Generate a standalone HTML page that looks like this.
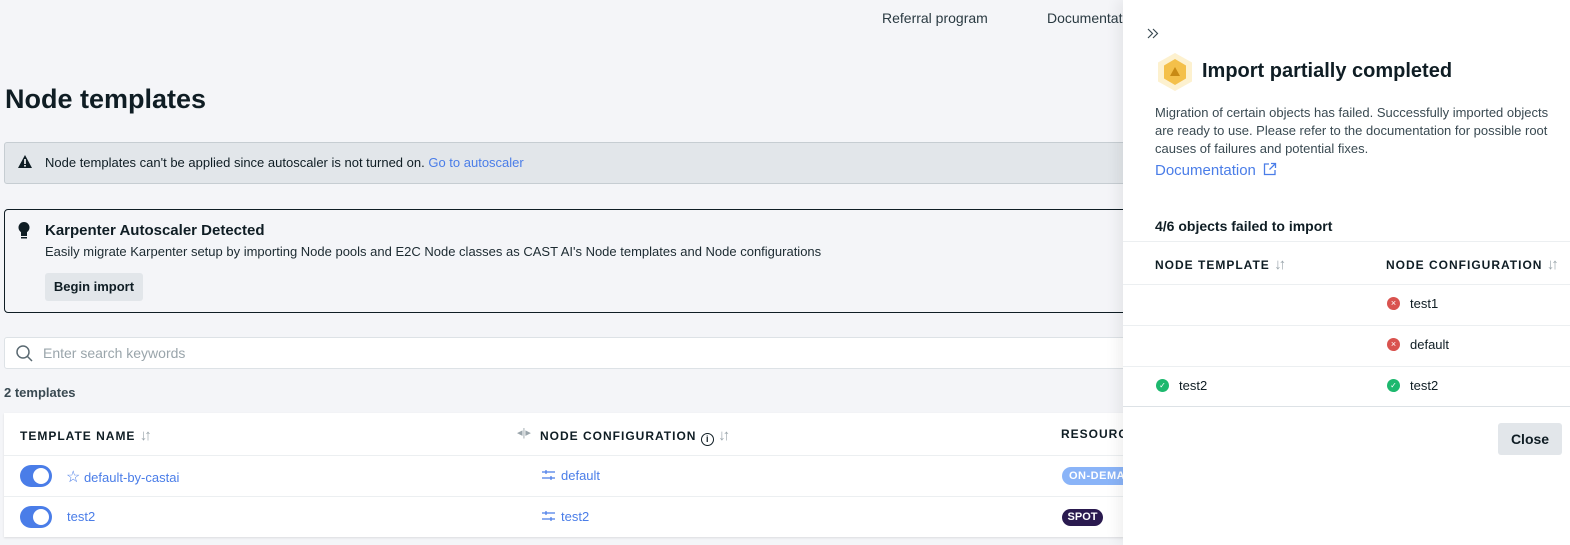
<!DOCTYPE html>
<html><head><meta charset="utf-8"><style>
*{box-sizing:border-box;margin:0;padding:0}
body{width:1570px;height:545px;overflow:hidden;background:#f4f5f8;font-family:"Liberation Sans",sans-serif;color:#0f1d24;position:relative}
.a{position:absolute;white-space:nowrap}
.link{color:#4a7de8}
.th{font-size:12px;font-weight:bold;letter-spacing:1px;color:#0f1d24}
.sort{color:#9aa5ab;font-weight:normal;letter-spacing:-3px;font-size:15px}
</style></head><body>
<div class="a" style="left:882px;top:10px;font-size:14px;color:#2a3a42">Referral program</div>
<div class="a" style="left:1047px;top:10px;font-size:14px;color:#2a3a42">Documentation</div>
<div class="a" style="left:5px;top:84px;font-size:27px;font-weight:bold">Node templates</div>

<div class="a" style="left:4px;top:142px;width:1140px;height:42px;background:#e2e6ea;border:1px solid #c6cdd2;border-radius:3px"></div>
<svg class="a" style="left:17px;top:154px" width="16" height="15" viewBox="0 0 16 15"><path d="M8 1L15 14H1Z" fill="#0f1d24"/><rect x="7.2" y="5" width="1.6" height="5" fill="#fff"/><rect x="7.2" y="11" width="1.6" height="1.6" fill="#fff"/></svg>
<div class="a" style="left:45px;top:155px;font-size:13px">Node templates can't be applied since autoscaler is not turned on. <span class="link">Go to autoscaler</span></div>

<div class="a" style="left:4px;top:209px;width:1140px;height:104px;border:1px solid #0f1d24;border-radius:4px;background:#f4f5f8"></div>
<svg class="a" style="left:18px;top:221px" width="12" height="20" viewBox="0 0 12 20"><circle cx="6" cy="6.5" r="5.5" fill="#0f1d24"/><rect x="3" y="10" width="6" height="5" fill="#0f1d24"/><rect x="3" y="16" width="6" height="1.5" fill="#0f1d24"/></svg>
<div class="a" style="left:45px;top:222px;font-size:15px;font-weight:bold">Karpenter Autoscaler Detected</div>
<div class="a" style="left:45px;top:244px;font-size:13px;color:#1c2a31">Easily migrate Karpenter setup by importing Node pools and E2C Node classes as CAST AI's Node templates and Node configurations</div>
<div class="a" style="left:45px;top:273px;width:98px;height:28px;background:#e2e6ea;border-radius:3px;font-size:13px;font-weight:bold;text-align:center;line-height:28px">Begin import</div>

<div class="a" style="left:4px;top:337px;width:1140px;height:32px;background:#fff;border:1px solid #dde2e6;border-radius:3px"></div>
<svg class="a" style="left:15px;top:344px" width="18" height="18" viewBox="0 0 18 18"><circle cx="8" cy="8" r="6" fill="none" stroke="#5b6a72" stroke-width="1.5"/><path d="M12.5 12.5L17 17" stroke="#5b6a72" stroke-width="1.5"/></svg>
<div class="a" style="left:43px;top:345px;font-size:14px;color:#9aa5ab">Enter search keywords</div>
<div class="a" style="left:4px;top:385px;font-size:13px;font-weight:bold;color:#3a4a52">2 templates</div>

<div class="a" style="left:4px;top:413px;width:1140px;height:124px;background:#fff;box-shadow:0 1px 2px rgba(0,0,0,.1)"></div>
<div class="a" style="left:4px;top:455px;width:1140px;height:1px;background:#eceff1"></div>
<div class="a" style="left:4px;top:496px;width:1140px;height:1px;background:#eceff1"></div>
<div class="a th" style="left:20px;top:427px">TEMPLATE NAME <span class="sort">↓↑</span></div>
<div class="a" style="left:517px;top:426px;color:#9aa5ab;font-size:11px">◂|▸</div>
<div class="a th" style="left:540px;top:427px">NODE CONFIGURATION <span style="display:inline-block;width:13px;height:13px;border:1.3px solid #0f1d24;border-radius:50%;font-size:9px;text-align:center;line-height:11px;letter-spacing:0;vertical-align:-2px">i</span> <span class="sort">↓↑</span></div>
<div class="a th" style="left:1061px;top:427px">RESOURC</div>
<div class="a" style="left:20px;top:465px;width:32px;height:22px;border-radius:11px;background:#4a7de8"><div style="position:absolute;right:3px;top:3px;width:16px;height:16px;border-radius:50%;background:#fff"></div></div>
<div class="a" style="left:20px;top:506px;width:32px;height:22px;border-radius:11px;background:#4a7de8"><div style="position:absolute;right:3px;top:3px;width:16px;height:16px;border-radius:50%;background:#fff"></div></div>
<div class="a link" style="left:66px;top:467px;font-size:13px"><span style="font-size:16px">☆</span> default-by-castai</div>
<div class="a link" style="left:67px;top:509px;font-size:13px">test2</div>
<svg class="a" style="left:542px;top:469px" width="13" height="12" viewBox="0 0 13 12"><path d="M0 3H13M0 9H13M4 1V5M9 7V11" stroke="#4a7de8" stroke-width="1.2"/></svg>
<div class="a link" style="left:561px;top:468px;font-size:13px">default</div>
<svg class="a" style="left:542px;top:510px" width="13" height="12" viewBox="0 0 13 12"><path d="M0 3H13M0 9H13M4 1V5M9 7V11" stroke="#4a7de8" stroke-width="1.2"/></svg>
<div class="a link" style="left:561px;top:509px;font-size:13px">test2</div>
<div class="a" style="left:1062px;top:467px;width:70px;height:18px;border-radius:9px;background:#8ab4f8;color:#fff;font-size:11px;font-weight:bold;line-height:18px;padding-left:7px;letter-spacing:.5px;overflow:hidden">ON-DEMAND</div>
<div class="a" style="left:1062px;top:509px;width:41px;height:17px;border-radius:9px;background:#2a1a4f;color:#fff;font-size:11px;font-weight:bold;line-height:17px;text-align:center">SPOT</div>

<!-- drawer -->
<div class="a" style="left:1123px;top:0;width:447px;height:545px;background:#fff;box-shadow:-6px 0 12px rgba(0,0,0,.06)"></div>
<svg class="a" style="left:1147px;top:28px" width="12" height="11" viewBox="0 0 12 11"><path d="M1 1L5.5 5.5L1 10M6 1L10.5 5.5L6 10" fill="none" stroke="#3a4a52" stroke-width="1.2"/></svg>
<svg class="a" style="left:1155px;top:52px" width="40" height="40" viewBox="0 0 40 40"><path d="M20 1L37 10.5V29.5L20 39L3 29.5V10.5Z" fill="#fdf1cf"/><path d="M20 7L31 13.5V26.5L20 33L9 26.5V13.5Z" fill="#f4c04a"/><path d="M20 15L25 24H15Z" fill="#c88a14"/></svg>
<div class="a" style="left:1202px;top:60px;font-size:20px;font-weight:bold">Import partially completed</div>
<div class="a" style="left:1155px;top:104px;font-size:13px;line-height:18px;color:#3a4a52;white-space:normal;width:410px">Migration of certain objects has failed. Successfully imported objects are ready to use. Please refer to the documentation for possible root causes of failures and potential fixes.</div>
<div class="a link" style="left:1155px;top:162px;font-size:15px">Documentation <svg width="14" height="14" viewBox="0 0 14 14" style="vertical-align:-1px;margin-left:3px"><path d="M6 2H1.5V12.5H12V8M8 1.5H12.5V6M12.5 1.5L6.5 7.5" fill="none" stroke="#4a7de8" stroke-width="1.3"/></svg></div>
<div class="a" style="left:1155px;top:218px;font-size:14px;font-weight:bold">4/6 objects failed to import</div>
<div class="a" style="left:1123px;top:241px;width:447px;height:1px;background:#eceff1"></div>
<div class="a th" style="left:1155px;top:256px">NODE TEMPLATE <span class="sort">↓↑</span></div>
<div class="a th" style="left:1386px;top:256px">NODE CONFIGURATION <span class="sort">↓↑</span></div>
<div class="a" style="left:1123px;top:284px;width:447px;height:1px;background:#eceff1"></div>
<div class="a" style="left:1123px;top:325px;width:447px;height:1px;background:#eceff1"></div>
<div class="a" style="left:1123px;top:366px;width:447px;height:1px;background:#eceff1"></div>
<div class="a" style="left:1123px;top:406px;width:447px;height:1px;background:#dde2e6"></div>
<div class="a" style="left:1387px;top:297px;width:13px;height:13px;border-radius:50%;background:#d9534f;color:#fff;font-size:9px;text-align:center;line-height:13px">×</div>
<div class="a" style="left:1410px;top:296px;font-size:13px">test1</div>
<div class="a" style="left:1387px;top:338px;width:13px;height:13px;border-radius:50%;background:#d9534f;color:#fff;font-size:9px;text-align:center;line-height:13px">×</div>
<div class="a" style="left:1410px;top:337px;font-size:13px">default</div>
<div class="a" style="left:1156px;top:379px;width:13px;height:13px;border-radius:50%;background:#1db86e;color:#fff;font-size:8px;text-align:center;line-height:13px">✓</div>
<div class="a" style="left:1179px;top:378px;font-size:13px">test2</div>
<div class="a" style="left:1387px;top:379px;width:13px;height:13px;border-radius:50%;background:#1db86e;color:#fff;font-size:8px;text-align:center;line-height:13px">✓</div>
<div class="a" style="left:1410px;top:378px;font-size:13px">test2</div>
<div class="a" style="left:1498px;top:423px;width:64px;height:32px;background:#e2e6ea;border-radius:3px;font-size:14px;font-weight:bold;text-align:center;line-height:32px">Close</div>
</body></html>
